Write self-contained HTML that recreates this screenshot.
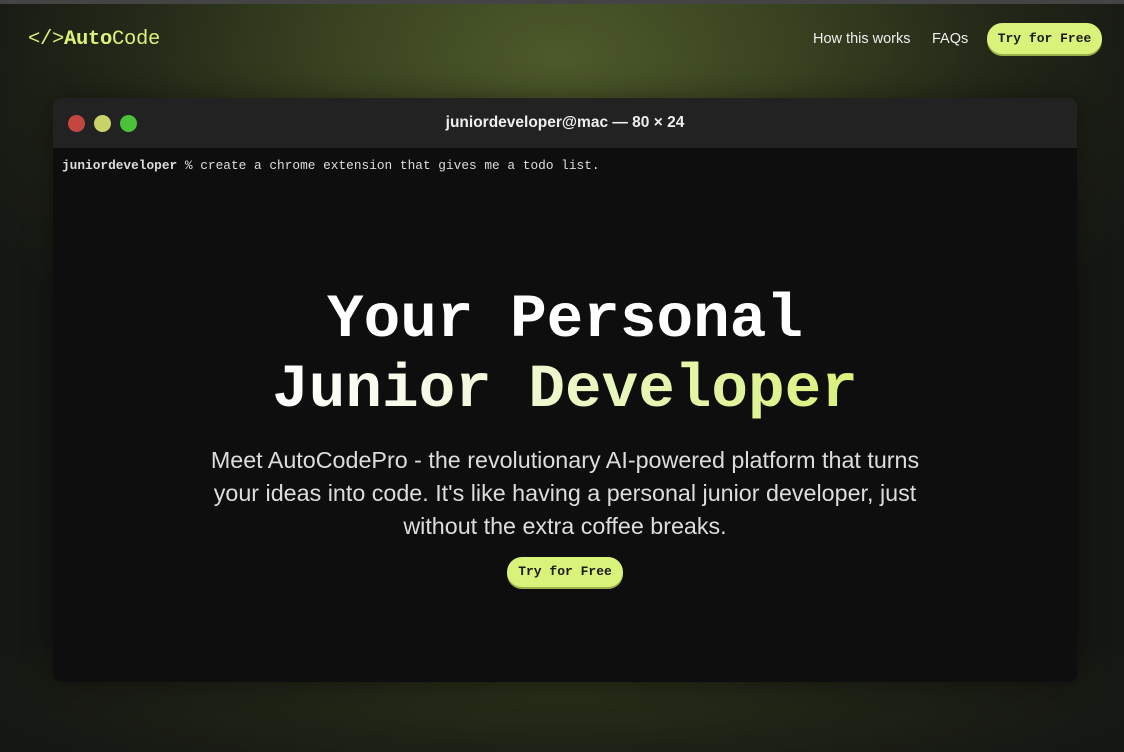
<!DOCTYPE html>
<html><head><meta charset="utf-8"><style>
*{margin:0;padding:0;box-sizing:border-box}
html,body{width:1124px;height:752px;overflow:hidden}
body{background:#141612;position:relative;font-family:"Liberation Sans",sans-serif;
background:radial-gradient(ellipse 620px 420px at 560px 60px,#4d5a2a 0%,#3a4421 35%,#232818 70%,#151713 100%);}
.topbar{position:absolute;left:0;top:0;width:1124px;height:4px;background:#444}
.glow{position:absolute;left:0;top:500px;width:1124px;height:252px;background:radial-gradient(ellipse 600px 110px at 562px 190px,rgba(60,70,30,.5),rgba(0,0,0,0))}
.logo{position:absolute;left:28px;top:28px;font-family:"Liberation Mono",monospace;font-size:20.5px;color:#d9f27a;letter-spacing:-.3px}
.logo b{font-weight:bold}
.nav{position:absolute;top:31px;font-size:14.5px;color:#eee}
.btn{position:absolute;background:#d9f27a;color:#1a1a1a;font-family:"Liberation Mono",monospace;font-weight:bold;font-size:13px;border-radius:18px;text-align:center;box-shadow:0 2px 0 #9bb04a}
.win{position:absolute;left:53px;top:98px;width:1024px;height:584px;background:#0e0e0e;border-radius:8px;overflow:hidden;box-shadow:0 0 30px rgba(0,0,0,.4)}
.hd{height:50px;background:#222;position:relative}
.dot{position:absolute;top:17px;width:17px;height:17px;border-radius:50%}
.ttl{position:absolute;left:0;right:0;top:16px;text-align:center;color:#eee;font-weight:bold;font-size:15.5px}
.cmd{position:absolute;left:9px;top:60px;font-family:"Liberation Mono",monospace;font-size:12.8px;color:#ddd}
h1{position:absolute;left:0;width:1024px;top:188px;text-align:center;font-family:"Liberation Mono",monospace;font-weight:bold;font-size:61px;line-height:70px;color:#fff}
.g{background:linear-gradient(90deg,#fff 0%,#f0f8d8 40%,#d9f27a 100%);-webkit-background-clip:text;background-clip:text;color:transparent}
p{position:absolute;left:0;width:1024px;top:346px;text-align:center;font-size:23.3px;line-height:33px;color:#ddd;font-weight:300}
</style></head><body>
<div class="topbar"></div><div class="glow"></div>
<div class="logo">&lt;/&gt;<b>Auto</b>Code</div>
<div class="nav" style="left:813px">How this works</div>
<div class="nav" style="left:932px">FAQs</div>
<div class="btn" style="left:987px;top:23px;width:115px;height:31px;line-height:31px">Try for Free</div>
<div class="win">
<div class="hd">
<div class="dot" style="left:15px;background:#c4473f"></div>
<div class="dot" style="left:41px;background:#c8d46a"></div>
<div class="dot" style="left:67px;background:#4cc23a"></div>
<div class="ttl">juniordeveloper@mac — 80 × 24</div>
</div>
<div class="cmd"><b>juniordeveloper</b> % create a chrome extension that gives me a todo list.</div>
<h1>Your Personal<br><span class="g">Junior Developer</span></h1>
<p>Meet AutoCodePro - the revolutionary AI-powered platform that turns<br>your ideas into code. It's like having a personal junior developer, just<br>without the extra coffee breaks.</p>
<div class="btn" style="left:454px;top:459px;width:116px;height:30px;line-height:30px">Try for Free</div>
</div>
</body></html>
